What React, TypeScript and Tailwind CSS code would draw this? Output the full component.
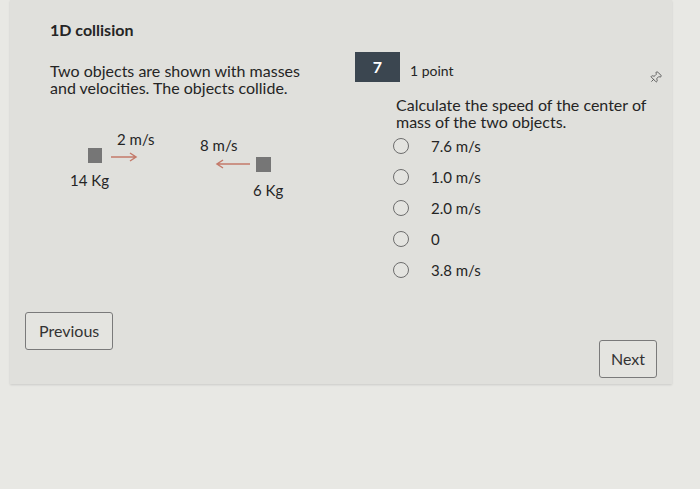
import { Pin } from 'lucide-react'

const options = ['7.6 m/s', '1.0 m/s', '2.0 m/s', '0', '3.8 m/s']

export default function App() {
  return (
    <div className="w-[700px] h-[489px] overflow-hidden bg-[#e8e8e4] text-[#252525]" style={{ fontFamily: 'Lato, "Open Sans", sans-serif' }}>
      <div className="ml-[10px] w-[662px] h-[384px] bg-[#e0e0dc] shadow-[0_1px_2px_rgba(0,0,0,0.12)] flex flex-col">
        <div className="flex flex-1">
          {/* left: question stem */}
          <div className="w-[345px] shrink-0 pl-[40px] pt-[20px]">
            <h2 className="text-[16px] font-bold leading-[20px]">1D collision</h2>
            <p className="mt-[22px] text-[16px] leading-[17px] w-[270px]">
              Two objects are shown with masses and velocities. The objects collide.
            </p>
            {/* diagram */}
            <div className="relative mt-[32px] ml-[15px] w-[230px] h-[76px] text-[15px] leading-[16px]">
              <span className="absolute left-[52px] top-[3px]">2 m/s</span>
              <span className="absolute left-[135px] top-[9px]">8 m/s</span>
              <div className="absolute left-[23px] top-[20px] w-[14px] h-[15px] bg-[#767676]" />
              <svg className="absolute left-[45px] top-[24px]" width="28" height="10" viewBox="0 0 28 10">
                <path d="M1 5H26M20 1L26 5L20 9" fill="none" stroke="#c47a6a" strokeWidth="1.5" />
              </svg>
              <svg className="absolute left-[150px] top-[31px]" width="36" height="10" viewBox="0 0 36 10">
                <path d="M35 5H2M8 1L2 5L8 9" fill="none" stroke="#c47a6a" strokeWidth="1.5" />
              </svg>
              <div className="absolute left-[191px] top-[29px] w-[15px] h-[15px] bg-[#767676]" />
              <span className="absolute left-[5px] top-[44px]">14 Kg</span>
              <span className="absolute left-[188px] top-[54px]">6 Kg</span>
            </div>
          </div>

          {/* right: question */}
          <div className="flex-1 pt-[52px] pr-[10px]">
            <div className="flex items-end gap-[10px]">
              <div className="w-[45px] h-[30px] bg-[#3b4650] text-white text-[16px] font-bold flex items-center justify-center">7</div>
              <span className="text-[14px] leading-[16px] mb-[3px]">1 point</span>
              <Pin size={13} strokeWidth={1.6} className="ml-auto -mb-[2px] rotate-45 text-[#555]" />
            </div>
            <p className="ml-[41px] mt-[14px] text-[16px] leading-[17px] w-[260px]">
              Calculate the speed of the center of mass of the two objects.
            </p>
            <div className="ml-[38px] mt-[8px] flex flex-col gap-[15px]">
              {options.map((o) => (
                <label key={o} className="flex items-center h-[16px]">
                  <span className="w-[16px] h-[16px] rounded-full border border-[#6d6d6d] bg-[#e4e4e0]" />
                  <span className="ml-[22px] text-[15px]">{o}</span>
                </label>
              ))}
            </div>
          </div>
        </div>

        <div className="flex justify-between items-start px-[15px] h-[76px]">
          <button className="mt-[4px] h-[38px] px-[13px] border border-[#7a7a7a] rounded-[3px] text-[16px] text-[#333] bg-[#e4e4e0]">Previous</button>
          <button className="mt-[32px] h-[38px] px-[11px] border border-[#7a7a7a] rounded-[3px] text-[16px] text-[#333] bg-[#e4e4e0]">Next</button>
        </div>
      </div>
    </div>
  )
}
